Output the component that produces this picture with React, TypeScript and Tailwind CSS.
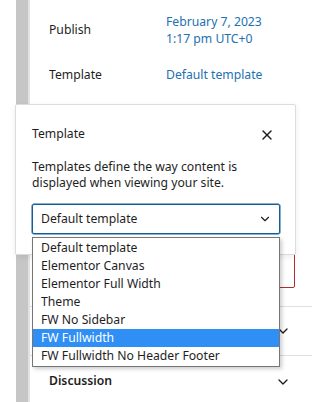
import { ChevronDown, X } from "lucide-react";

const options = [
  "Default template",
  "Elementor Canvas",
  "Elementor Full Width",
  "Theme",
  "FW No Sidebar",
  "FW Fullwidth",
  "FW Fullwidth No Header Footer",
];

export default function App() {
  const selected = "FW Fullwidth";

  return (
    <div className="relative w-[312px] h-[402px] overflow-hidden bg-white text-[12.2px] text-[#1e1e1e] font-['Noto_Sans',sans-serif]">
      <div className="flex h-full">
        <div className="w-[16px] shrink-0" />
        <div className="w-[12px] shrink-0 bg-[#c6c6c6]" />
        <div className="w-[2px] shrink-0 bg-[#e2e2e2]" />

        {/* sidebar panel */}
        <div className="flex-1 flex flex-col">
          <div className="flex pl-[19px] pt-[13px] leading-[17px]">
            <span className="w-[117px] pt-[8px]">Publish</span>
            <span className="text-[#2271b1]">
              February 7, 2023
              <br />
              1:17 pm UTC+0
            </span>
          </div>
          <div className="flex pl-[19px] pt-[19px] leading-[17px]">
            <span className="w-[117px]">Template</span>
            <span className="text-[#2271b1]">Default template</span>
          </div>

          <div className="h-[205px] shrink-0 flex justify-end items-end pr-[17px]">
            <div className="w-[120px] h-[36px] border border-[#b32d2e] rounded-[2px]" />
          </div>

          {/* panel row hidden under the open dropdown */}
          <div className="mt-[18px] shrink-0 border-t border-[#e0e0e0] h-[49px] flex items-center justify-end pr-[21px]">
            <ChevronDown size={16} strokeWidth={2} />
          </div>
          <div className="shrink-0 border-t border-[#e0e0e0] h-[52px] flex items-center justify-between pl-[19px] pr-[21px] font-semibold">
            <span>Discussion</span>
            <ChevronDown size={16} strokeWidth={2} />
          </div>
        </div>
      </div>

      {/* template popover */}
      <div className="absolute left-[15px] top-[104px] w-[281px] h-[151px] bg-white border border-[#dcdcdc] rounded-[2px] shadow-[0_2px_6px_rgba(0,0,0,0.08)] pl-[16px] pr-[15px]">
        <div className="flex items-center justify-between h-[58px] pt-[1px]">
          <span>Template</span>
          <X size={16} strokeWidth={2.2} className="mr-[5px]" />
        </div>
        <p className="leading-[16px] -mt-[4px]">
          Templates define the way content is displayed when viewing your site.
        </p>
        <div className="mt-[13px] h-[30px] border border-[#135e96] ring-[0.5px] ring-[#135e96] rounded-[2px] flex items-center justify-between pl-[8px] pr-[7px]">
          <span>Default template</span>
          <ChevronDown size={14} strokeWidth={2} />
        </div>
      </div>

      {/* native select dropdown */}
      <div className="absolute left-[32px] top-[237px] w-[248px] bg-white border border-[#767676] shadow-[2px_2px_4px_rgba(0,0,0,0.2)] py-[1px]">
        {options.map((o) => (
          <div
            key={o}
            className={
              o === selected
                ? "h-[18px] leading-[18px] pl-[8px] bg-[#2f8ff5] text-white"
                : "h-[18px] leading-[18px] pl-[8px]"
            }
          >
            {o}
          </div>
        ))}
      </div>
    </div>
  );
}
